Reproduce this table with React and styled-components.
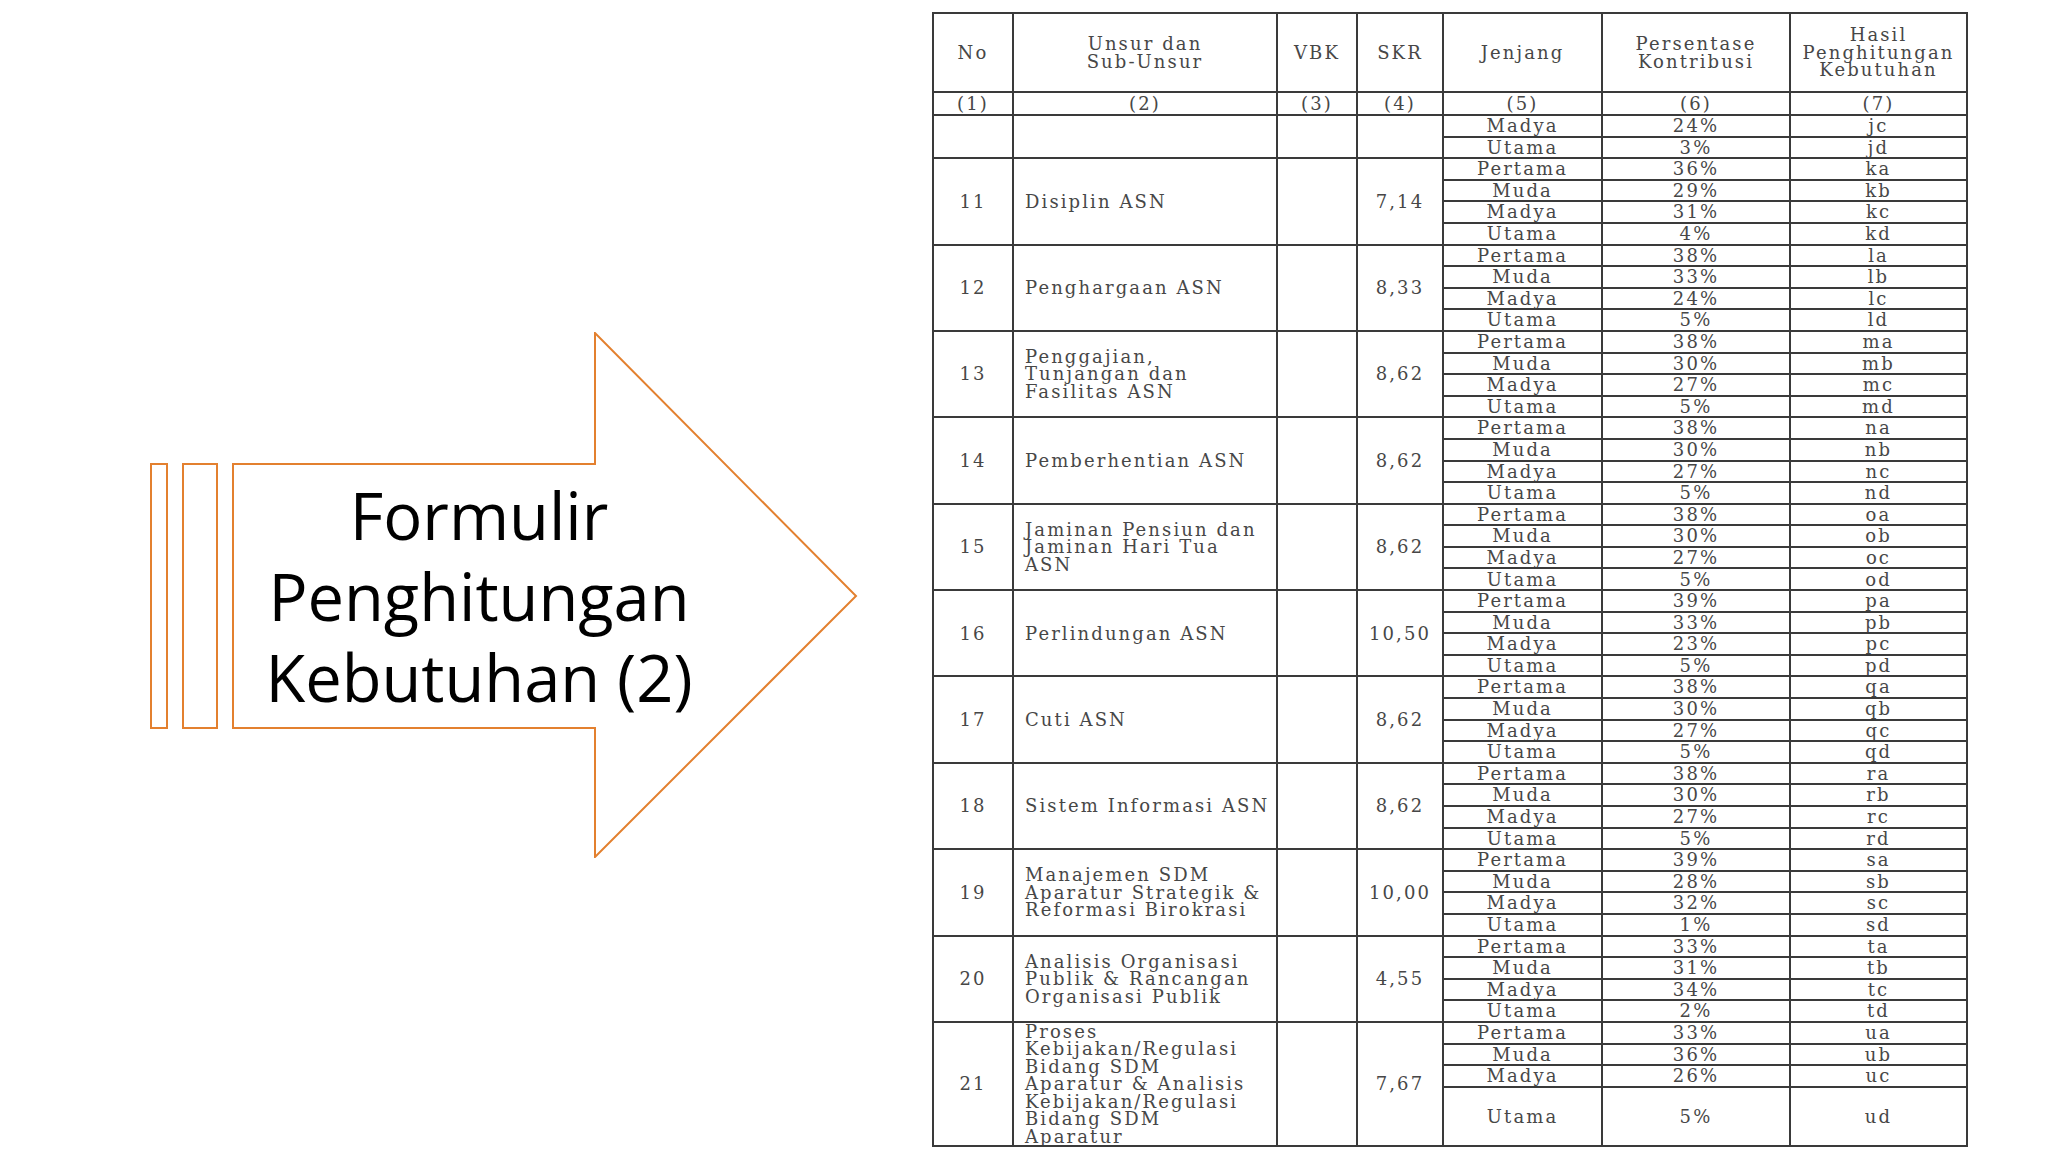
import React from 'react'
import styled, { createGlobalStyle } from 'styled-components'

const GlobalStyle = createGlobalStyle`
  html, body {
    margin: 0;
    padding: 0;
    background: #fff;
  }
`

const Page = styled.div`
  width: 2048px;
  height: 1152px;
  display: flex;
  align-items: flex-start;
  padding: 12px 0 0 150px;
  box-sizing: border-box;
  gap: 74px;
  overflow: hidden;
`

const ArrowBox = styled.div`
  position: relative;
  flex: none;
  width: 708px;
  height: 526px;
  margin-top: 320px;
`

const ArrowShape = styled.svg`
  position: absolute;
  inset: 0;
`

const ArrowText = styled.div`
  position: absolute;
  left: 0;
  right: 0;
  top: 132px;
  height: 264px;
  padding-right: 50px;
  display: flex;
  align-items: center;
  justify-content: center;
  text-align: center;
  font-family: "Open Sans", "Noto Sans", sans-serif;
  font-size: 65px;
  line-height: 81px;
  color: #000;
`

const Table = styled.table`
  flex: none;
  width: 1034px;
  border-collapse: collapse;
  table-layout: fixed;
  font-family: "DejaVu Serif", "Liberation Serif", serif;
  font-size: 18px;
  letter-spacing: 2.1px;
  line-height: 17.5px;
  color: #474747;
`

const Cell = styled.td`
  border: 2px solid #3a3a3a;
  padding: 0;
  text-align: ${p => (p.$left ? 'left' : 'center')};
  padding-left: ${p => (p.$left ? '11px' : '0')};
  vertical-align: middle;
  white-space: nowrap;
  overflow: hidden;
`

const Row = styled.tr`
  height: ${p => p.$h}px;
`

const cols = [80, 264, 80, 86, 159, 188, 177]

const groups = [
  { partial: true, rows: [['Madya', '24%', 'jc'], ['Utama', '3%', 'jd']] },
  { no: '11', name: ['Disiplin ASN'], skr: '7,14', p: ['36%', '29%', '31%', '4%'], k: 'k' },
  { no: '12', name: ['Penghargaan ASN'], skr: '8,33', p: ['38%', '33%', '24%', '5%'], k: 'l' },
  { no: '13', name: ['Penggajian,', 'Tunjangan dan', 'Fasilitas ASN'], skr: '8,62', p: ['38%', '30%', '27%', '5%'], k: 'm' },
  { no: '14', name: ['Pemberhentian ASN'], skr: '8,62', p: ['38%', '30%', '27%', '5%'], k: 'n' },
  { no: '15', name: ['Jaminan Pensiun dan', 'Jaminan Hari Tua', 'ASN'], skr: '8,62', p: ['38%', '30%', '27%', '5%'], k: 'o' },
  { no: '16', name: ['Perlindungan ASN'], skr: '10,50', p: ['39%', '33%', '23%', '5%'], k: 'p' },
  { no: '17', name: ['Cuti ASN'], skr: '8,62', p: ['38%', '30%', '27%', '5%'], k: 'q' },
  { no: '18', name: ['Sistem Informasi ASN'], skr: '8,62', p: ['38%', '30%', '27%', '5%'], k: 'r' },
  { no: '19', name: ['Manajemen SDM', 'Aparatur Strategik &', 'Reformasi Birokrasi'], skr: '10,00', p: ['39%', '28%', '32%', '1%'], k: 's' },
  { no: '20', name: ['Analisis Organisasi', 'Publik & Rancangan', 'Organisasi Publik'], skr: '4,55', p: ['33%', '31%', '34%', '2%'], k: 't' },
  {
    no: '21',
    name: ['Proses', 'Kebijakan/Regulasi', 'Bidang SDM', 'Aparatur & Analisis', 'Kebijakan/Regulasi', 'Bidang SDM', 'Aparatur'],
    skr: '7,67',
    p: ['33%', '36%', '26%', '5%'],
    k: 'u',
    lastTall: true,
  },
]

const levels = ['Pertama', 'Muda', 'Madya', 'Utama']
const SUB = 21.6

const Lines = ({ lines }) =>
  lines.map((l, i) => (
    <React.Fragment key={i}>
      {i > 0 && <br />}
      {l}
    </React.Fragment>
  ))

function Group({ g }) {
  const rows = g.partial
    ? g.rows
    : levels.map((lv, i) => [lv, g.p[i], g.k + 'abcd'[i]])

  return rows.map((r, i) => {
    const h = g.lastTall && i === 3 ? 59 : SUB
    return (
      <Row key={i} $h={h}>
        {i === 0 && (
          <>
            <Cell rowSpan={rows.length}>{g.no}</Cell>
            <Cell rowSpan={rows.length} $left>
              {g.name && <Lines lines={g.name} />}
            </Cell>
            <Cell rowSpan={rows.length} />
            <Cell rowSpan={rows.length}>{g.skr}</Cell>
          </>
        )}
        <Cell>{r[0]}</Cell>
        <Cell>{r[1]}</Cell>
        <Cell>{r[2]}</Cell>
      </Row>
    )
  })
}

export default function App() {
  return (
    <>
      <GlobalStyle />
      <Page>
        <ArrowBox>
          <ArrowShape width="708" height="526" viewBox="0 0 708 526">
            <g fill="none" stroke="#E3802F" strokeWidth="2">
              <rect x="1" y="132" width="16" height="264" />
              <rect x="33" y="132" width="34" height="264" />
              <polygon points="83,132 445,132 445,1 706,264 445,525 445,396 83,396" />
            </g>
          </ArrowShape>
          <ArrowText>
            Formulir
            <br />
            Penghitungan
            <br />
            Kebutuhan (2)
          </ArrowText>
        </ArrowBox>

        <Table>
          <colgroup>
            {cols.map((w, i) => (
              <col key={i} style={{ width: w }} />
            ))}
          </colgroup>
          <tbody>
            <Row $h={79}>
              <Cell>No</Cell>
              <Cell>Unsur dan<br />Sub-Unsur</Cell>
              <Cell>VBK</Cell>
              <Cell>SKR</Cell>
              <Cell>Jenjang</Cell>
              <Cell>Persentase<br />Kontribusi</Cell>
              <Cell>Hasil<br />Penghitungan<br />Kebutuhan</Cell>
            </Row>
            <Row $h={23}>
              {[1, 2, 3, 4, 5, 6, 7].map(n => (
                <Cell key={n}>({n})</Cell>
              ))}
            </Row>
            {groups.map((g, i) => (
              <Group key={i} g={g} />
            ))}
          </tbody>
        </Table>
      </Page>
    </>
  )
}
